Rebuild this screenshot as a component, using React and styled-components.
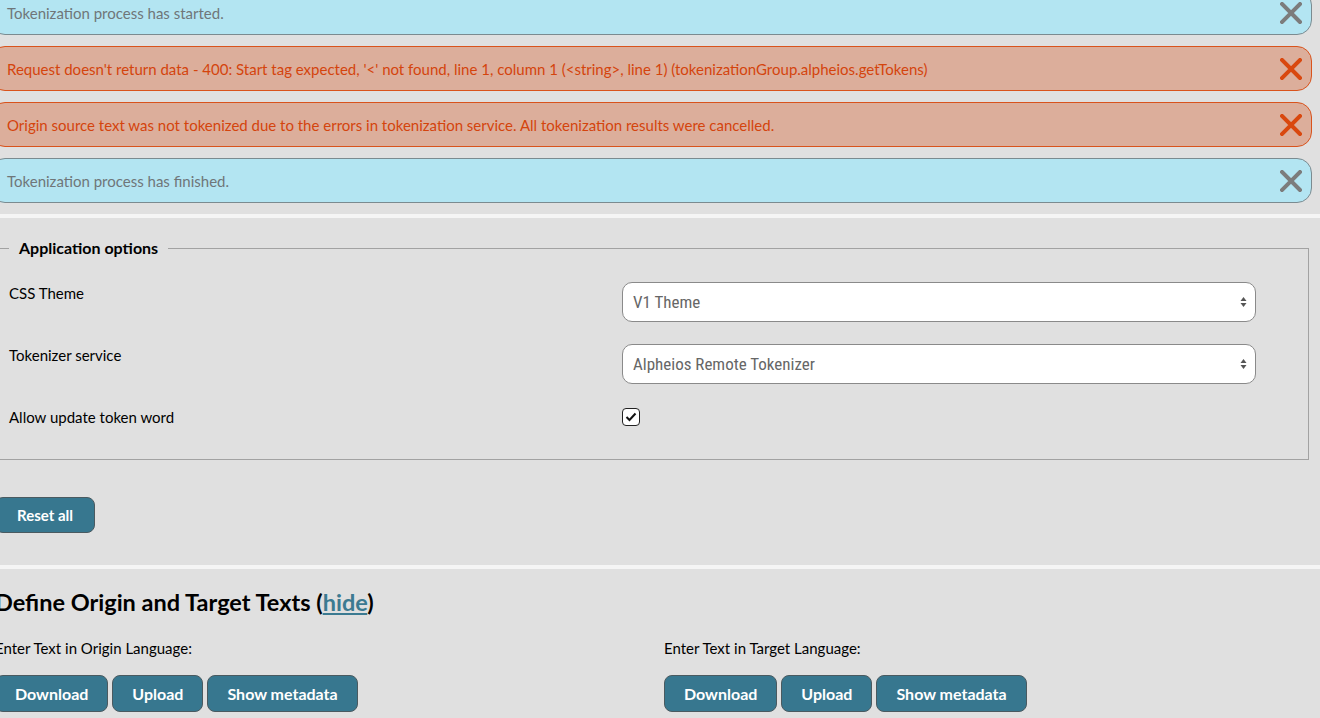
import styled, { createGlobalStyle, css } from "styled-components"

const GlobalStyle = createGlobalStyle`
html, body {
  margin: 0;
  padding: 0;
  background: #e0e0e0;
  overflow: hidden;
}
body {
  font-family: Lato, "Liberation Sans", sans-serif;
  font-size: 15px;
  color: #000;
}
`

const messages = [
  { type: "info", text: "Tokenization process has started." },
  { type: "error", text: "Request doesn't return data - 400: Start tag expected, '<' not found, line 1, column 1 (<string>, line 1) (tokenizationGroup.alpheios.getTokens)" },
  { type: "error", text: "Origin source text was not tokenized due to the errors in tokenization service. All tokenization results were cancelled." },
  { type: "info", text: "Tokenization process has finished." },
]

const CloseIcon = ({ color }) => (
  <svg width="22" height="22" viewBox="0 0 22 22">
    <path d="M2 2 L20 20 M20 2 L2 20" stroke={color} strokeWidth="4" strokeLinecap="square" />
  </svg>
)

const SortArrows = () => (
  <svg width="7" height="12" viewBox="0 0 7 12">
    <path d="M3.5 1 L6.5 5 H0.5 Z M3.5 11 L6.5 7 H0.5 Z" fill="#555" />
  </svg>
)

const App = () => {
  return (
    <Page>
      <GlobalStyle />
      <Messages>
        {messages.map((m, i) => (
          <Alert key={i} $type={m.type}>
            <span>{m.text}</span>
            <CloseIcon color={m.type === "error" ? "#d9480f" : "#7c7c7c"} />
          </Alert>
        ))}
      </Messages>

      <OptionsSection>
        <Fieldset>
          <Legend>Application options</Legend>
          <OptionRow>
            <OptionLabel>CSS Theme</OptionLabel>
            <SelectWrap>
              <Select defaultValue="v1">
                <option value="v1">V1 Theme</option>
              </Select>
              <Arrows><SortArrows /></Arrows>
            </SelectWrap>
          </OptionRow>
          <OptionRow>
            <OptionLabel>Tokenizer service</OptionLabel>
            <SelectWrap>
              <Select defaultValue="remote">
                <option value="remote">Alpheios Remote Tokenizer</option>
              </Select>
              <Arrows><SortArrows /></Arrows>
            </SelectWrap>
          </OptionRow>
          <OptionRow $check>
            <OptionLabel>Allow update token word</OptionLabel>
            <Checkbox>
              <svg width="12" height="10" viewBox="0 0 12 10">
                <path d="M1.5 5 L4.5 8 L10.5 1.5" stroke="#111" strokeWidth="2" fill="none" />
              </svg>
            </Checkbox>
          </OptionRow>
        </Fieldset>
        <ResetButton>Reset all</ResetButton>
      </OptionsSection>

      <TextsSection>
        <Heading>Define Origin and Target Texts (<HideLink href="#">hide</HideLink>)</Heading>
        <Columns>
          <Column>
            <ColumnLabel>Enter Text in Origin Language:</ColumnLabel>
            <ButtonRow>
              <ActionButton>Download</ActionButton>
              <ActionButton>Upload</ActionButton>
              <ActionButton>Show metadata</ActionButton>
            </ButtonRow>
          </Column>
          <Column>
            <ColumnLabel>Enter Text in Target Language:</ColumnLabel>
            <ButtonRow>
              <ActionButton>Download</ActionButton>
              <ActionButton>Upload</ActionButton>
              <ActionButton>Show metadata</ActionButton>
            </ButtonRow>
          </Column>
        </Columns>
      </TextsSection>
    </Page>
  )
}

const Page = styled.div`
margin-left: -10px;
width: 1330px;
`;

const Messages = styled.div`
display: flex;
flex-direction: column;
gap: 11px;
margin: -10px 8px 0 0;
padding-bottom: 11px;
`;

const Alert = styled.div`
height: 45px;
box-sizing: border-box;
display: flex;
align-items: center;
justify-content: space-between;
padding: 0 9px 0 16px;
border-radius: 15px;
border: 1px solid;
${(p) => p.$type === "error" ? css`
  background: #dcae9b;
  border-color: #d9531c;
  color: #d4440d;
` : css`
  background: #b3e5f2;
  border-color: #7b8b90;
  color: #6f7679;
`}
`;

const OptionsSection = styled.section`
border-top: 4px solid #f5f5f5;
padding: 18px 0 32px;
`;

const Fieldset = styled.fieldset`
margin: 0 11px 0 0;
padding: 8px 0 32px 18px;
border: 1px solid #a2a2a2;
`;

const Legend = styled.legend`
padding: 0 10px;
font-weight: 700;
font-size: 16px;
line-height: 24px;
`;

const OptionRow = styled.div`
display: grid;
grid-template-columns: 613px 634px;
align-items: ${(p) => (p.$check ? "center" : "start")};
margin-top: 22px;
&:first-of-type {
  margin-top: 14px;
}
`;

const OptionLabel = styled.div`
line-height: 20px;
padding-top: 1px;
`;

const SelectWrap = styled.div`
position: relative;
`;

const Select = styled.select`
appearance: none;
width: 100%;
height: 40px;
box-sizing: border-box;
border: 1px solid #8a8a8a;
border-radius: 10px;
background: #fff;
padding: 0 10px;
font-family: "Liberation Sans Narrow", "Roboto Condensed", Roboto, sans-serif;
font-size: 17px;
color: #666;
`;

const Arrows = styled.span`
position: absolute;
right: 9px;
top: 14px;
pointer-events: none;
display: flex;
`;

const Checkbox = styled.span`
width: 16px;
height: 16px;
border: 1px solid #222;
border-radius: 4px;
background: #fff;
display: flex;
align-items: center;
justify-content: center;
`;

const buttonBase = css`
background: #37778f;
color: #fff;
font-family: inherit;
font-weight: 700;
font-size: 16px;
border: 1px solid #4a5a60;
border-radius: 8px;
padding: 0 19px;
cursor: pointer;
`;

const ResetButton = styled.button`
${buttonBase}
font-size: 15px;
margin: 37px 0 0 5px;
height: 36px;
width: 100px;
padding: 0;
`;

const TextsSection = styled.section`
border-top: 4px solid #f5f5f5;
padding: 18px 0 20px 5px;
`;

const Heading = styled.h2`
margin: 0;
font-size: 23.5px;
line-height: 30px;
font-weight: 700;
`;

const HideLink = styled.a`
color: #3b7a91;
text-decoration: underline;
`;

const Columns = styled.div`
display: grid;
grid-template-columns: 669px 1fr;
margin-top: 21px;
`;

const Column = styled.div`
display: flex;
flex-direction: column;
`;

const ColumnLabel = styled.div`
line-height: 20px;
`;

const ButtonRow = styled.div`
display: flex;
gap: 4px;
margin-top: 17px;
`;

const ActionButton = styled.button`
${buttonBase}
height: 37px;
`;

export default App
